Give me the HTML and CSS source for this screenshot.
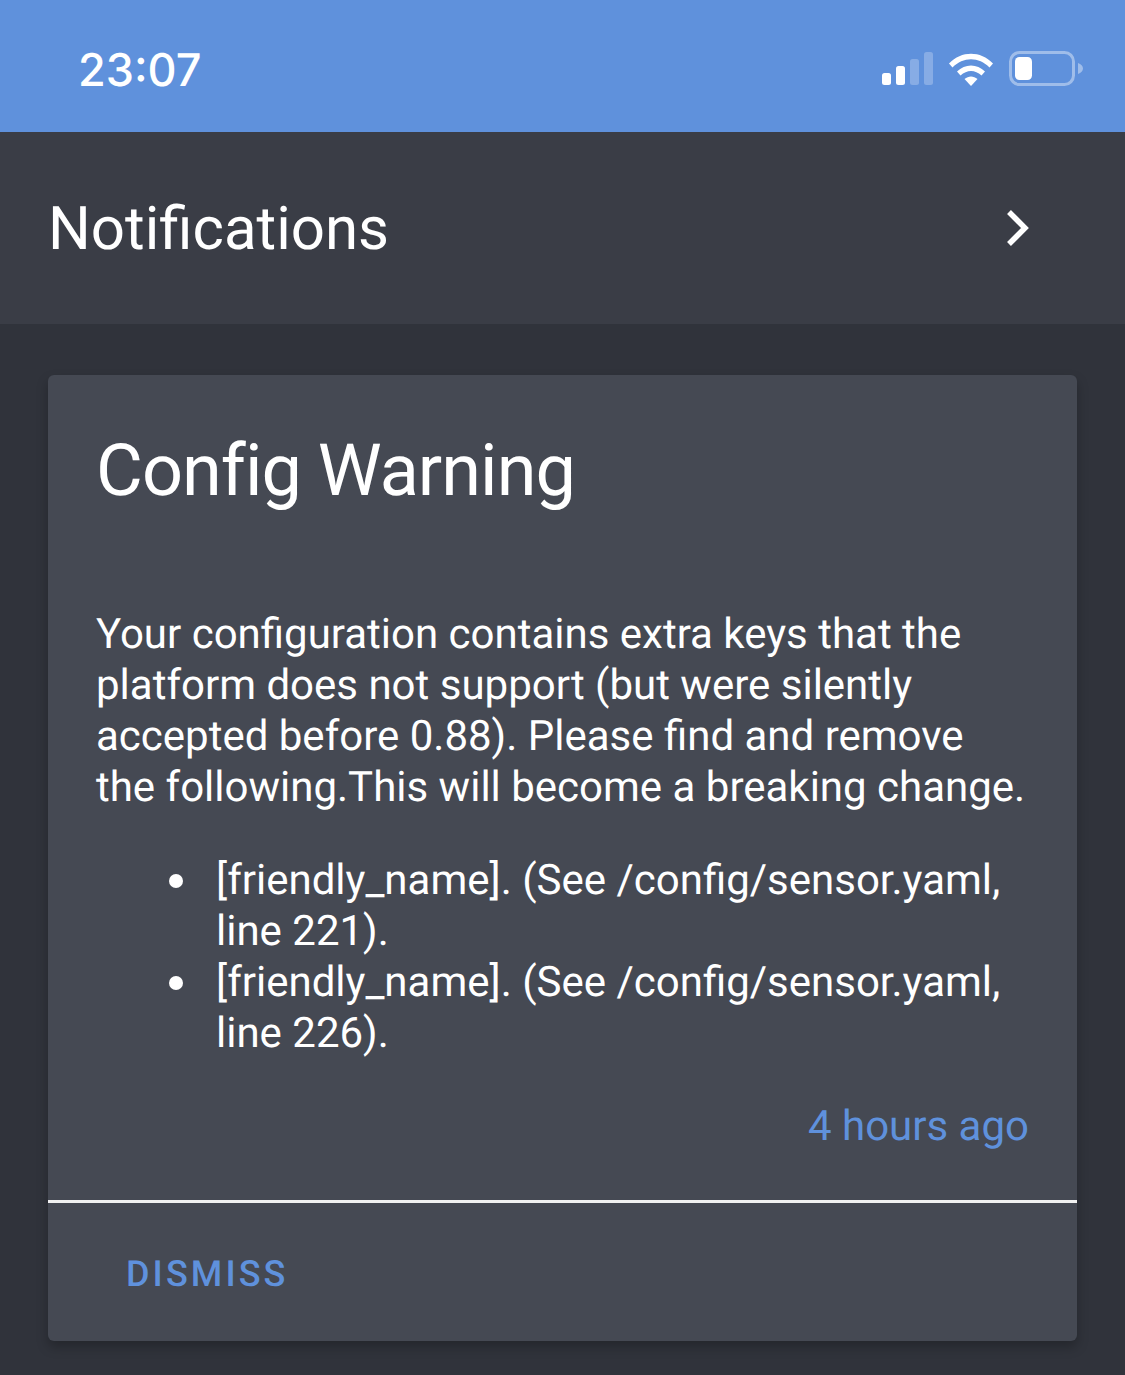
FILE: index.html
```html
<!DOCTYPE html>
<html>
  <head>
    <meta charset="utf-8" />
    <title>Notifications</title>
    <link rel="stylesheet" href="styles.css">
  </head>
  <body>
    <div class="status-bar">
      <span class="clock">23:07</span>
      <div class="status-icons">
        <svg class="icon-signal" width="52" height="34" viewBox="0 0 52 34">
          <rect x="0" y="21" width="9" height="12" rx="2.5" fill="#fff"/>
          <rect x="14" y="14" width="9" height="19" rx="2.5" fill="#fff"/>
          <rect x="28" y="7" width="9" height="26" rx="2.5" fill="#fff" fill-opacity="0.25"/>
          <rect x="42" y="0" width="9" height="33" rx="2.5" fill="#fff" fill-opacity="0.25"/>
        </svg>
        <svg class="icon-wifi" width="46" height="34" viewBox="0 0 46 34">
          <path d="M1 11.500C13.500 -1.500 32.500 -1.500 45 11.500L41.500 15.500C31 4.500 15 4.500 4.500 15.500Z" fill="#fff"/>
          <path d="M9 19.500C17 11.500 29 11.500 37 19.500L33.500 23.500C27 17.500 19 17.500 12.500 23.500Z" fill="#fff"/>
          <path d="M16.500 27C20.500 23.500 25.500 23.500 29.500 27L23 34Z" fill="#fff"/>
        </svg>
        <svg class="icon-battery" width="76" height="36" viewBox="0 0 76 36">
          <rect x="1.500" y="1.500" width="63" height="32" rx="9" fill="none" stroke="#fff" stroke-opacity="0.4" stroke-width="3"/>
          <rect x="6" y="6" width="17" height="23" rx="4.500" fill="#fff"/>
          <path d="M69 12C72 13 74 15 74 17.500C74 20 72 22 69 23Z" fill="#fff" fill-opacity="0.4"/>
        </svg>
      </div>
    </div>

    <div class="header">
      <h1>Notifications</h1>
      <svg class="chevron" width="26" height="38" viewBox="0 0 26 38">
        <path d="M4 3L20 19L4 35" fill="none" stroke="#fff" stroke-width="5.500"/>
      </svg>
    </div>

    <div class="content">
      <div class="card">
        <div class="card-body">
          <h2>Config Warning</h2>
          <p>Your configuration contains extra keys that the platform does not support (but were silently accepted before 0.88). Please find and remove the following.This will become a breaking change.</p>
          <ul>
            <li>[friendly_name]. (See /config/sensor.yaml, line 221).</li>
            <li>[friendly_name]. (See /config/sensor.yaml, line 226).</li>
          </ul>
          <div class="time">4 hours ago</div>
        </div>
        <div class="card-actions">
          <span class="dismiss">DISMISS</span>
        </div>
      </div>
    </div>
  </body>
</html>
```

FILE: styles.css
```css
* {
  margin: 0;
  padding: 0;
  box-sizing: border-box;
}

html,
body {
  height: 100%;
  overflow: hidden;
}

body {
  font-family: Roboto, "Liberation Sans", sans-serif;
  font-variant-ligatures: common-ligatures;
  text-rendering: geometricPrecision;
  background-color: #30333b;
  color: #fff;
}

.status-bar {
  height: 132px;
  background-color: #5f91dc;
  display: flex;
  justify-content: space-between;
  align-items: center;
  padding: 6px 40px 0 78px;
}

.clock {
  font-family: Inter, Roboto, sans-serif;
  font-size: 45px;
  font-weight: 500;
}

.status-icons {
  display: flex;
  align-items: center;
  gap: 14px;
}

.icon-battery {
  margin-left: 1px;
}

.header {
  height: 192px;
  background-color: #3a3d46;
  display: flex;
  justify-content: space-between;
  align-items: center;
  padding: 0 94px 0 48px;
}

.header h1 {
  font-size: 60px;
  font-weight: 400;
}

.content {
  padding: 51px 48px 0;
}

.card {
  background-color: #454953;
  border-radius: 6px;
  box-shadow: 0 6px 12px rgba(0, 0, 0, 0.25);
}

.card-body {
  padding: 48px 48px 0;
}

.card-body h2 {
  font-size: 72px;
  font-weight: 400;
  line-height: 96px;
  letter-spacing: -0.95px;
  margin-bottom: 90px;
}

.card-body p,
.card-body li {
  font-size: 42px;
  line-height: 51px;
}

.card-body ul {
  margin: 42px 0 0;
  padding-left: 120px;
  list-style: none;
}

.card-body li {
  display: flex;
  gap: 33px;
}

.card-body li:before {
  content: "";
  flex: none;
  width: 14px;
  height: 14px;
  margin: 19px 0 0 -47px;
  border-radius: 50%;
  background-color: #fff;
}

.time {
  margin-top: 42px;
  text-align: right;
  font-size: 42px;
  line-height: 51px;
  color: #5f91dc;
}

.card-body .time {
  padding-bottom: 48px;
}

.card-actions {
  border-top: 3px solid #f1f1f1;
  height: 141px;
  display: flex;
  align-items: center;
  padding: 4px 0 0 78px;
}

.dismiss {
  font-size: 36px;
  font-weight: 500;
  letter-spacing: 3.1px;
  color: #5f91dc;
}
```
